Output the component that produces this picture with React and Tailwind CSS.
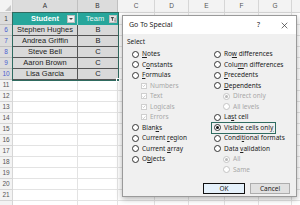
import React from "react";

const dataRows = [
  { n: "6", a: "Stephen Hughes", b: "B" },
  { n: "7", a: "Andrea Griffin", b: "B" },
  { n: "8", a: "Steve Bell", b: "C" },
  { n: "9", a: "Aaron Brown", b: "C" },
  { n: "10", a: "Lisa Garcia", b: "C" },
];
const emptyRows = ["11", "12", "13", "14", "15", "16", "17", "18", "19", "20", "21", ""];

function RestCols() {
  return (
    <>
      <div className="w-[37px] shrink-0 border-r border-b border-[#e3e3e3]" />
      <div className="w-[34px] shrink-0 border-r border-b border-[#e3e3e3]" />
      <div className="w-[36px] shrink-0 border-r border-b border-[#e3e3e3]" />
      <div className="w-[34px] shrink-0 border-r border-b border-[#e3e3e3]" />
      <div className="w-[33px] shrink-0 border-r border-b border-[#e3e3e3]" />
      <div className="flex-1 border-b border-[#e3e3e3]" />
    </>
  );
}

function Radio({ checked, disabled }) {
  return (
    <span
      className={`relative inline-flex items-center justify-center w-[7px] h-[7px] rounded-full border shrink-0 bg-white ${
        disabled ? "border-[#c4c4c4]" : "border-[#333]"
      }`}
    >
      {checked && (
        <span className={`w-[3px] h-[3px] rounded-full ${disabled ? "bg-[#b8b8b8]" : "bg-[#111]"}`} />
      )}
    </span>
  );
}

function Check() {
  return (
    <span className="inline-flex items-center justify-center w-[6px] h-[6px] border border-[#cfcfcf] bg-white shrink-0">
      <svg width="5" height="5" viewBox="0 0 10 10">
        <path d="M1.5 5.2 L4 7.6 L8.6 2.4" fill="none" stroke="#b5b5b5" strokeWidth="1.6" />
      </svg>
    </span>
  );
}

function Opt({ children, checked }) {
  return (
    <div className="h-[10.5px] flex items-center gap-[3px] text-[#222]">
      <Radio checked={checked} />
      <span className="leading-none">{children}</span>
    </div>
  );
}

function Sub({ children, kind, checked }) {
  return (
    <div className="h-[10.5px] flex items-center gap-[3px] pl-[9px] text-[#a8a8a8]">
      {kind === "check" ? <Check /> : <Radio checked={checked} disabled />}
      <span className="leading-none">{children}</span>
    </div>
  );
}

const U = ({ children }) => <span className="underline decoration-[0.5px] underline-offset-[1px]">{children}</span>;

export default function App() {
  return (
    <div
      className="relative w-[300px] h-[205px] overflow-hidden bg-white"
      style={{ fontFamily: '"Liberation Sans", Arial, sans-serif' }}
    >
      {/* column header */}
      <div className="flex h-[13px] bg-[#f3f3f3] text-[6.5px] text-[#555]">
        <div className="relative w-[13px] shrink-0 border-r border-b border-[#d0d0d0]">
          <div className="absolute right-[1px] bottom-[1px] w-0 h-0 border-l-[6px] border-l-transparent border-b-[6px] border-b-[#c8c8c8]" />
        </div>
        <div className="w-[65px] shrink-0 flex items-center justify-center bg-[#dcdcdc] border-r border-b border-[#c0c0c0] text-[#333]">A</div>
        <div className="w-[40px] shrink-0 flex items-center justify-center bg-[#dcdcdc] border-r border-b border-[#c0c0c0] text-[#333]">B</div>
        <div className="w-[37px] shrink-0 flex items-center justify-center border-r border-b border-[#d6d6d6]">C</div>
        <div className="w-[34px] shrink-0 flex items-center justify-center border-r border-b border-[#d6d6d6]">D</div>
        <div className="w-[36px] shrink-0 flex items-center justify-center border-r border-b border-[#d6d6d6]">E</div>
        <div className="w-[34px] shrink-0 flex items-center justify-center border-r border-b border-[#d6d6d6]">F</div>
        <div className="w-[33px] shrink-0 flex items-center justify-center border-r border-b border-[#d6d6d6]">G</div>
        <div className="flex-1 border-b border-[#d6d6d6]" />
      </div>

      {/* row 1 header */}
      <div className="flex h-[12px] text-[7.5px]">
        <div className="w-[13px] shrink-0 flex items-center justify-center bg-[#dcdcdc] border-r border-b border-[#c0c0c0] text-[6.5px] text-[#444]">1</div>
        <div className="relative w-[65px] shrink-0 flex items-center justify-center bg-[#27a69b] border-r border-[#9fd6d0] text-white font-bold">
          Student
          <span className="absolute right-[2px] top-[2px] w-[8px] h-[8px] bg-[#f2f2f2] border border-[#bfbfbf] flex items-center justify-center">
            <span className="w-0 h-0 border-l-[2px] border-r-[2px] border-t-[2.5px] border-l-transparent border-r-transparent border-t-[#444]" />
          </span>
        </div>
        <div className="relative w-[40px] shrink-0 flex items-center justify-center bg-[#27a69b] text-[#e8f6f4] pr-[6px]">
          Team
          <span className="absolute right-[1px] top-[2px] w-[8px] h-[8px] bg-[#e6e6e6] border border-[#bfbfbf] flex items-center justify-center">
            <svg width="6" height="6" viewBox="0 0 10 10">
              <path d="M1 1.5 H7 L4.8 4.5 V8.5 L3.2 7.5 V4.5 Z" fill="#444" />
              <path d="M8.5 3 V9 M7.3 7.6 L8.5 9 L9.7 7.6" stroke="#444" strokeWidth="0.9" fill="none" />
            </svg>
          </span>
        </div>
        <RestCols />
      </div>

      {dataRows.map((r) => (
        <div key={r.n} className="flex h-[11px] text-[7.5px] text-[#1e1e1e]">
          <div className="w-[13px] shrink-0 flex items-center justify-center bg-[#dcdcdc] border-r border-b border-[#c0c0c0] text-[6.5px] text-[#4a5fd0]">{r.n}</div>
          <div className="w-[65px] shrink-0 flex items-center justify-center bg-[#d9d9d9] border-r border-b border-[#555]">{r.a}</div>
          <div className="w-[40px] shrink-0 flex items-center justify-center bg-[#d9d9d9] border-b border-[#555]">{r.b}</div>
          <RestCols />
        </div>
      ))}

      {emptyRows.map((n, i) => (
        <div key={i} className="flex h-[11px]">
          <div className="w-[13px] shrink-0 flex items-center justify-center bg-[#f3f3f3] border-r border-b border-[#d6d6d6] text-[6.5px] text-[#555]">{n}</div>
          <div className="w-[65px] shrink-0 border-r border-b border-[#e3e3e3]" />
          <div className="w-[40px] shrink-0 border-r border-b border-[#e3e3e3]" />
          <RestCols />
        </div>
      ))}

      {/* selection outline */}
      <div className="absolute left-[12px] top-[12px] w-[107px] h-[69px] border-[1.5px] border-[#2f6b60] pointer-events-none" />
      <div className="absolute left-[116px] top-[78px] w-[4px] h-[4px] bg-[#2f6b60] border border-white" />

      {/* dialog */}
      <div
        className="absolute left-[122px] top-[15px] w-[175px] h-[182px] bg-[#f0f0f0] border border-[#9a9a9a] shadow-[0_2px_6px_rgba(0,0,0,0.3)] flex flex-col text-[6.5px]"
        style={{ fontFamily: '"Noto Sans", "Open Sans", sans-serif' }}
      >
        <div className="h-[18px] shrink-0 bg-white flex items-center pl-[6px] pr-[8px] text-[7px] text-[#222]">
          <span className="flex-1">Go To Special</span>
          <span className="mr-[21px] text-[7px]">?</span>
          <svg width="7" height="7" viewBox="0 0 10 10">
            <path d="M1 1 L9 9 M9 1 L1 9" stroke="#333" strokeWidth="1" />
          </svg>
        </div>
        <div className="flex-1 flex flex-col pt-[3px] pl-[4px]">
          <div className="h-[10px] flex items-center text-[#222]">Select</div>
          <div className="flex mt-[2px] pl-[5px]">
            <div className="w-[82px] shrink-0 flex flex-col">
              <Opt><U>N</U>otes</Opt>
              <Opt>C<U>o</U>nstants</Opt>
              <Opt><U>F</U>ormulas</Opt>
              <Sub kind="check">Numbers</Sub>
              <Sub kind="check">Text</Sub>
              <Sub kind="check">Logicals</Sub>
              <Sub kind="check">Errors</Sub>
              <Opt>Blan<U>k</U>s</Opt>
              <Opt>Current <U>r</U>egion</Opt>
              <Opt>Current <U>a</U>rray</Opt>
              <Opt>O<U>b</U>jects</Opt>
            </div>
            <div className="flex-1 flex flex-col">
              <Opt>Ro<U>w</U> differences</Opt>
              <Opt>Colu<U>m</U>n differences</Opt>
              <Opt><U>P</U>recedents</Opt>
              <Opt><U>D</U>ependents</Opt>
              <Sub checked>Direct only</Sub>
              <Sub>All levels</Sub>
              <Opt>La<U>s</U>t cell</Opt>
              <div className="h-[10.5px] flex items-center">
                <div className="-ml-[3px] h-[12px] flex items-center gap-[3px] pl-[2px] pr-[2px] border-[1.5px] border-[#2f6b60] text-[#222]">
                  <Radio checked />
                  <span className="leading-none">Visible cells onl<U>y</U></span>
                </div>
              </div>
              <Opt>Condi<U>t</U>ional formats</Opt>
              <Opt>Data <U>v</U>alidation</Opt>
              <Sub checked>All</Sub>
              <Sub>Same</Sub>
            </div>
          </div>
          <div className="flex justify-end gap-[5px] mt-[8px] pr-[6px]">
            <div className="w-[42px] h-[11px] flex items-center justify-center bg-[#e5f1fb] border-[1.5px] border-[#111] text-[#222]">OK</div>
            <div className="w-[40px] h-[11px] flex items-center justify-center bg-[#e1e1e1] border border-[#adadad] text-[#222]">Cancel</div>
          </div>
        </div>
      </div>
    </div>
  );
}
